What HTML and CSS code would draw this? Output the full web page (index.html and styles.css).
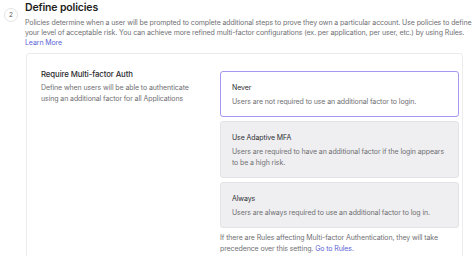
FILE: index.html
```html
<!DOCTYPE html>
<html lang="en">
<head>
    <meta charset="UTF-8">
    <title>Define policies</title>
    <link rel="stylesheet" href="styles.css">
</head>
<body>
    <div class="step">
        <div class="step-num">2</div>
        <div class="step-body">
            <h2 class="step-title">Define policies</h2>
            <p class="step-desc">
                Policies determine when a user will be prompted to complete additional steps to prove they own a particular account. Use policies to define your level of acceptable risk. You can achieve more refined multi-factor configurations (ex. per application, per user, etc.) by using Rules.
                <a href="#" class="link">Learn More</a>
            </p>

            <div class="card">
                <div class="card-label">
                    <div class="label-title">Require Multi-factor Auth</div>
                    <div class="label-desc">Define when users will be able to authenticate using an additional factor for all Applications</div>
                </div>
                <div class="card-options">
                    <div class="option selected">
                        <div class="option-title">Never</div>
                        <div class="option-desc">Users are not required to use an additional factor to login.</div>
                    </div>
                    <div class="option">
                        <div class="option-title">Use Adaptive MFA</div>
                        <div class="option-desc">Users are required to have an additional factor if the login appears to be a high risk.</div>
                    </div>
                    <div class="option">
                        <div class="option-title">Always</div>
                        <div class="option-desc">Users are always required to use an additional factor to log in.</div>
                    </div>
                    <p class="options-note">
                        If there are Rules affecting Multi-factor Authentication, they will take precedence over this setting. <a href="#" class="link">Go to Rules.</a>
                    </p>
                </div>
            </div>
        </div>
    </div>
</body>
</html>
```

FILE: styles.css
```css
body {
    margin: 0;
    font-family: Inter, 'Noto Sans', sans-serif;
    font-size: 7px;
    letter-spacing: -0.1px;
    color: #6f6f73;
    background-color: #ffffff;
}

.step {
    display: flex;
    gap: 7px;
    padding: 2px 0 0 4px;
}

.step-num {
    flex: 0 0 auto;
    width: 12px;
    height: 12px;
    margin-top: 6px;
    border: 1px solid #e4e4e6;
    border-radius: 50%;
    display: flex;
    align-items: center;
    justify-content: center;
    font-size: 6.5px;
    color: #555;
}

.step-body {
    flex: 1;
}

.step-title {
    margin: 0;
    font-size: 10.5px;
    font-weight: 600;
    letter-spacing: -0.15px;
    line-height: 12px;
    color: #1e1e22;
}

.step-desc {
    margin: 4px 0 0 0;
    line-height: 10.2px;
}

.link {
    color: #5a5fd6;
    text-decoration: none;
}

.card {
    display: flex;
    margin: 4px 11px 0 1px;
    padding: 15px 3px 8px 14px;
    border: 1px solid #ececee;
    border-radius: 3px;
}

.card-label {
    flex: 0 0 159px;
    padding-right: 20px;
}

.label-title {
    font-size: 7.8px;
    font-weight: 500;
    line-height: 11px;
    color: #2a2a2e;
}

.label-desc {
    margin-top: 2px;
    line-height: 11px;
}

.card-options {
    flex: 1;
    margin-top: 2px;
    display: flex;
    flex-direction: column;
    gap: 4px;
}

.option {
    padding: 10px 11px 9px;
    border: 1px solid #e3e3e6;
    border-radius: 3px;
    background-color: #efeff1;
}

.option.selected {
    background-color: #ffffff;
    border-color: #a597f2;
}

.option-title {
    line-height: 11px;
    color: #2e2e33;
}

.option-desc {
    margin-top: 3px;
    line-height: 11px;
}

.options-note {
    margin: 0;
    line-height: 11px;
}
```
